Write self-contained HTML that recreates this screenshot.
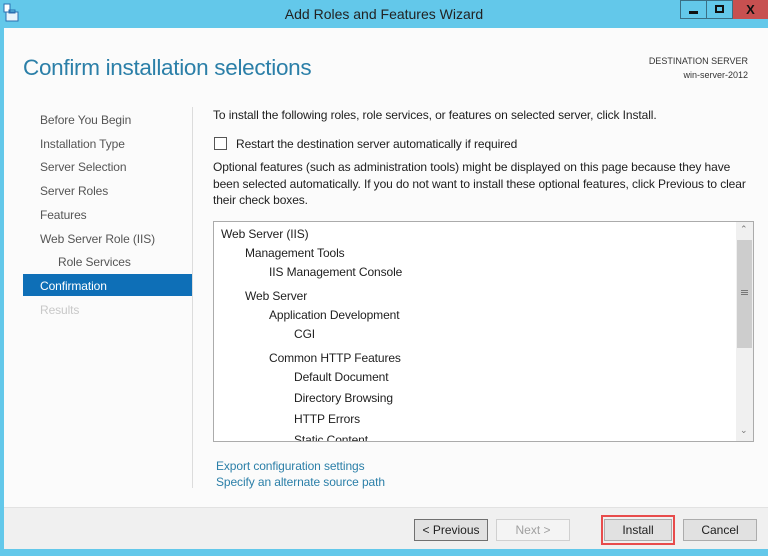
<!DOCTYPE html>
<html><head><meta charset="utf-8"><style>
*{margin:0;padding:0;box-sizing:border-box}
body{width:768px;height:556px;overflow:hidden;background:#63c8ea;font-family:"Liberation Sans",sans-serif;position:relative;color:#1e1e1e}
.a{position:absolute;white-space:nowrap}
.t{font-size:12px;letter-spacing:-0.1px}
.nav{font-size:12px;color:#555;left:40px;letter-spacing:-0.1px}
.li{font-size:12px;letter-spacing:-0.1px;color:#1e1e1e}
.btn{position:absolute;top:519px;height:22px;border:1px solid #acacac;background:#e1e1e1;font-size:12px;text-align:center;line-height:20px}
</style></head><body>
<div class="a" style="left:0;top:0;width:768px;height:28px;background:#63c8ea"></div>
<svg class="a" style="left:3px;top:3px" width="18" height="20" viewBox="0 0 18 20"><rect x="1" y="1" width="6" height="8" fill="#fff" stroke="#2a6fb0"/><rect x="3" y="9" width="12" height="9" fill="#e8f4fb" stroke="#2a6fb0"/><rect x="6" y="7" width="6" height="3" fill="none" stroke="#2a6fb0"/></svg>
<div class="a" style="left:0;width:768px;top:6px;text-align:center;font-size:14px;color:#222">Add Roles and Features Wizard</div>
<div class="a" style="left:680px;top:0;width:27px;height:19px;border:1px solid #3a6f85;background:#63c8ea"><div class="a" style="left:8px;top:10px;width:9px;height:3px;background:#111"></div></div>
<div class="a" style="left:706px;top:0;width:27px;height:19px;border:1px solid #3a6f85;background:#63c8ea"><div class="a" style="left:8px;top:4px;width:9px;height:8px;border:2px solid #111"></div></div>
<div class="a" style="left:733px;top:0;width:35px;height:19px;background:#c75050;color:#111;font-weight:bold;font-size:13px;text-align:center;line-height:19px">X</div>
<div class="a" style="left:4px;top:28px;width:764px;height:479px;background:#fbfbfb"></div>
<div class="a" style="left:4px;top:507px;width:764px;height:42px;background:#f0f0f0;border-top:1px solid #e2e2e2"></div>
<div class="a" style="left:23px;top:55px;font-size:22.5px;color:#2b7fa8;letter-spacing:-0.3px">Confirm installation selections</div>
<div class="a" style="right:20px;top:54px;font-size:9px;color:#333;text-align:right;line-height:14px">DESTINATION SERVER<br>win-server-2012</div>
<div class="a nav" style="top:113px">Before You Begin</div>
<div class="a nav" style="top:137px">Installation Type</div>
<div class="a nav" style="top:160px">Server Selection</div>
<div class="a nav" style="top:184px">Server Roles</div>
<div class="a nav" style="top:208px">Features</div>
<div class="a nav" style="top:232px">Web Server Role (IIS)</div>
<div class="a nav" style="top:255px;left:58px">Role Services</div>
<div class="a" style="left:23px;top:274px;width:169px;height:22px;background:#0e6fb7"></div>
<div class="a nav" style="top:279px;color:#fff">Confirmation</div>
<div class="a nav" style="top:303px;color:#c8c8c8">Results</div>
<div class="a" style="left:192px;top:107px;width:1px;height:381px;background:#dcdcdc"></div>
<div class="a t" style="left:213px;top:108px">To install the following roles, role services, or features on selected server, click Install.</div>
<div class="a" style="left:214px;top:137px;width:13px;height:13px;border:1px solid #555;background:#fff"></div>
<div class="a t" style="left:236px;top:137px">Restart the destination server automatically if required</div>
<div class="a t" style="left:213px;top:159px;line-height:16.5px;white-space:normal;width:544px">Optional features (such as administration tools) might be displayed on this page because they have been selected automatically. If you do not want to install these optional features, click Previous to clear their check boxes.</div>
<div class="a" style="left:213px;top:221px;width:541px;height:221px;border:1px solid #ababab;background:#fff;overflow:hidden">
<div class="a li" style="left:7px;top:5px">Web Server (IIS)</div>
<div class="a li" style="left:31px;top:24px">Management Tools</div>
<div class="a li" style="left:55px;top:43px">IIS Management Console</div>
<div class="a li" style="left:31px;top:67px">Web Server</div>
<div class="a li" style="left:55px;top:86px">Application Development</div>
<div class="a li" style="left:80px;top:105px">CGI</div>
<div class="a li" style="left:55px;top:129px">Common HTTP Features</div>
<div class="a li" style="left:80px;top:148px">Default Document</div>
<div class="a li" style="left:80px;top:169px">Directory Browsing</div>
<div class="a li" style="left:80px;top:190px">HTTP Errors</div>
<div class="a li" style="left:80px;top:211px">Static Content</div>
<div class="a" style="left:522px;top:0;width:17px;height:219px;background:#f0f0f0"></div>
<div class="a" style="left:523px;top:18px;width:15px;height:108px;background:#cdcdcd"></div>
<div class="a" style="left:526px;top:2px;font-size:9px;color:#777">&#8963;</div>
<div class="a" style="left:526px;top:203px;font-size:9px;color:#777">&#8964;</div>
<div class="a" style="left:527px;top:68px;width:7px;height:5px;border-top:1px solid #777;border-bottom:1px solid #777"></div>
<div class="a" style="left:527px;top:70px;width:7px;height:1px;background:#777"></div>
</div>
<div class="a t" style="left:216px;top:459px;color:#2b7fa8">Export configuration settings</div>
<div class="a t" style="left:216px;top:475px;color:#2b7fa8">Specify an alternate source path</div>
<div class="btn" style="left:414px;width:74px;border-color:#707070">&lt; Previous</div>
<div class="btn" style="left:496px;width:74px;color:#a0a0a0;background:#f4f4f4;border-color:#d0d0d0">Next &gt;</div>
<div class="a" style="left:601px;top:515px;width:74px;height:30px;border:2px solid #e84c4c"></div>
<div class="btn" style="left:604px;width:68px">Install</div>
<div class="btn" style="left:683px;width:74px">Cancel</div>
</body></html>
